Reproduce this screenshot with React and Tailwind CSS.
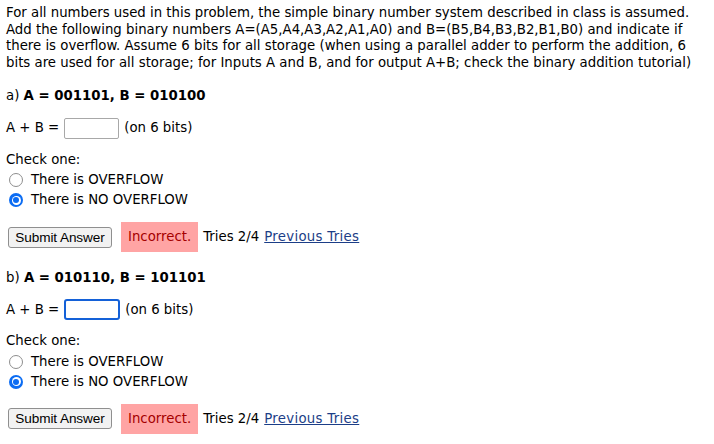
import React from 'react';

// Verdana-like body text; DejaVu Sans is the closest installed family.
const body = "font-['DejaVu_Sans',Verdana,sans-serif] text-[13.3px] text-black";

function Radio({ checked }) {
  if (checked) {
    return (
      <span className="flex h-[14px] w-[14px] items-center justify-center rounded-full bg-[#0b6cf3]">
        <span className="flex h-[9px] w-[9px] items-center justify-center rounded-full bg-white">
          <span className="h-[6px] w-[6px] rounded-full bg-[#0b6cf3]" />
        </span>
      </span>
    );
  }
  return <span className="block h-[14px] w-[14px] rounded-full border border-[#8e8e8e] bg-white" />;
}

function Part({ label, a, b, focused, first }) {
  return (
    <div className={first ? 'mt-[16px]' : 'mt-[16.5px]'}>
      <div className="h-[17px] leading-[17px]">
        {label}) <b>A = {a}, B = {b}</b>
      </div>

      <div className="mt-[13px] flex h-[22px] items-center">
        <span>A + B =</span>
        <span
          className={
            focused
              ? 'ml-[5px] h-[21px] w-[56px] rounded-[3px] border-2 border-[#1461d8] bg-white'
              : 'ml-[5px] h-[21px] w-[55px] rounded-[2px] border border-[#a8a8a8] bg-white'
          }
        />
        <span className="ml-[5px]">(on 6 bits)</span>
      </div>

      <div className="mt-[11.5px] h-[17px] leading-[17px]">Check one:</div>
      <div className="mt-[2.5px] flex h-[20px] items-center">
        <span className="ml-[3px] w-[22px]"><Radio /></span>
        <span>There is OVERFLOW</span>
      </div>
      <div className="flex h-[20px] items-center">
        <span className="ml-[3px] w-[22px]"><Radio checked /></span>
        <span>There is NO OVERFLOW</span>
      </div>

      <div className="mt-[12px] flex h-[30px] items-center">
        <button className="ml-[2px] h-[21px] w-[104px] rounded-[3px] border border-[#8f8f8f] bg-[#f2f2f2] font-['Liberation_Sans',Arial,sans-serif] text-[13.6px] leading-none tracking-[-0.1px] text-black">
          Submit Answer
        </button>
        <span className="ml-[9px] flex h-[30px] items-center bg-[#ffa4a4] px-[7px] text-[#a50000]">
          Incorrect.
        </span>
        <span className="ml-[5px]">Tries 2/4</span>
        <a href="#" className="ml-[5px] tracking-[0.3px] text-[#1c3e87] underline">Previous Tries</a>
      </div>
    </div>
  );
}

export default function App() {
  return (
    <div className={`${body} min-h-[444px] w-[714px] bg-white px-[6px] pt-[5px]`}>
      <p className="leading-[16.6px]">
        For all numbers used in this problem, the simple binary number system described in class is assumed.
        Add the following binary numbers A=(A5,A4,A3,A2,A1,A0) and B=(B5,B4,B3,B2,B1,B0) and indicate if
        there is overflow. Assume 6 bits for all storage (when using a parallel adder to perform the addition, 6
        bits are used for all storage; for Inputs A and B, and for output A+B; check the binary addition tutorial)
      </p>
      <Part label="a" a="001101" b="010100" first />
      <Part label="b" a="010110" b="101101" focused />
    </div>
  );
}
